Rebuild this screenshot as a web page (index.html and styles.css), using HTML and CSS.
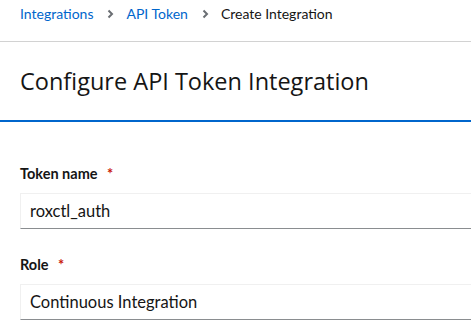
FILE: index.html
```html
<!DOCTYPE html>
<html>
<head>
    <meta charset="UTF-8">
    <title>Create Integration</title>
    <link rel="stylesheet" href="styles.css">
</head>
<body>
    <nav class="breadcrumb">
        <a href="#" class="crumb-link">Integrations</a>
        <span class="crumb-sep">
            <svg width="7" height="10" viewBox="0 0 7 10"><path d="M1.5 1.5 L5 5 L1.5 8.5" fill="none" stroke="#6a6e73" stroke-width="2"/></svg>
        </span>
        <a href="#" class="crumb-link">API Token</a>
        <span class="crumb-sep">
            <svg width="7" height="10" viewBox="0 0 7 10"><path d="M1.5 1.5 L5 5 L1.5 8.5" fill="none" stroke="#6a6e73" stroke-width="2"/></svg>
        </span>
        <span class="crumb-current">Create Integration</span>
    </nav>

    <header class="page-header">
        <h1>Configure API Token Integration</h1>
    </header>

    <form class="form">
        <div class="form-group">
            <label class="form-label">Token name <span class="required">*</span></label>
            <input class="form-input" type="text" value="roxctl_auth">
        </div>
        <div class="form-group">
            <label class="form-label">Role <span class="required">*</span></label>
            <input class="form-input" type="text" value="Continuous Integration">
        </div>
    </form>
</body>
</html>
```

FILE: styles.css
```css
body {
    margin: 0;
    font-family: Lato, "Open Sans", sans-serif;
    color: #151515;
    background-color: #fff;
    overflow: hidden;
}

.breadcrumb {
    display: flex;
    align-items: center;
    padding: 3px 20px 17px;
    font-size: 14px;
    line-height: 21px;
    border-bottom: 1px solid #d2d2d2;
}

.crumb-link {
    color: #0066cc;
    text-decoration: none;
}

.crumb-sep {
    display: flex;
    align-items: center;
    margin: 0 12px 0 14px;
}

.crumb-current {
    color: #151515;
}

.page-header {
    padding: 25px 20px 24px;
    border-bottom: 2px solid #0066cc;
}

h1 {
    margin: 0;
    font-family: "Open Sans", sans-serif;
    font-size: 23.5px;
    font-weight: 400;
    line-height: 29px;
}

.form {
    padding: 41px 0 0 20px;
    display: flex;
    flex-direction: column;
    gap: 25px;
}

.form-group {
    display: flex;
    flex-direction: column;
}

.form-label {
    font-size: 14.5px;
    font-weight: 700;
    line-height: 21px;
    margin-bottom: 9px;
}

.required {
    color: #c9190b;
    margin-left: 6px;
}

.form-input {
    box-sizing: border-box;
    width: 100%;
    height: 36px;
    padding: 0 9px;
    font-family: inherit;
    font-size: 16.5px;
    color: #151515;
    border: 1px solid #f0f0f0;
    border-bottom-color: #8a8d90;
    border-right: none;
    outline: none;
}
```
